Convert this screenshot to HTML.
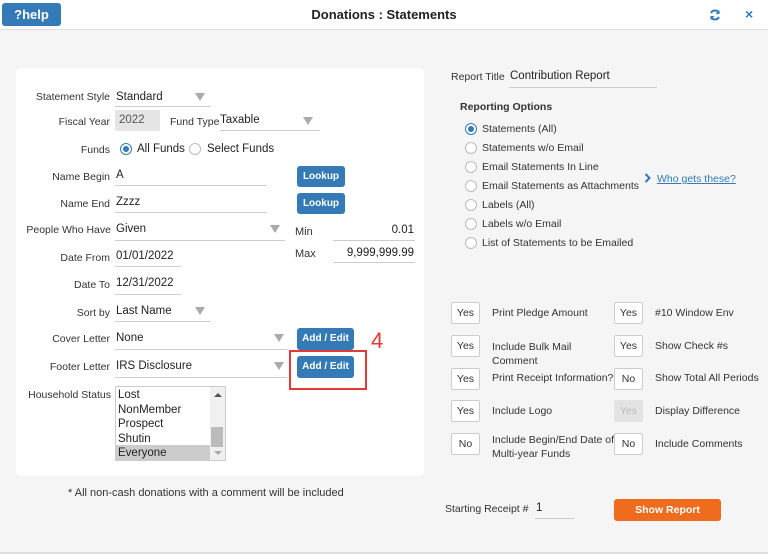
<!DOCTYPE html>
<html><head><meta charset="utf-8"><style>
*{margin:0;padding:0;box-sizing:border-box}
body{width:768px;height:554px;background:#f5f5f5;font-family:"Liberation Sans",sans-serif;color:#333;position:relative;overflow:hidden}
.a{position:absolute;white-space:nowrap}
.hdr{position:absolute;left:0;top:0;width:768px;height:30px;background:#fff;border-bottom:1px solid #ddd}
.lbl{font-size:10.5px;color:#333;text-align:right;width:110px}
.val{font-size:11.5px;color:#222}
.ul{position:absolute;border-bottom:1px solid #ccc}
.tri{position:absolute;width:0;height:0;border-left:5px solid transparent;border-right:5px solid transparent;border-top:8px solid #aaa}
.btn{position:absolute;background:#337ab7;color:#fff;font-size:10px;font-weight:bold;text-align:center;border-radius:3px}
.yn{position:absolute;width:29px;height:22px;border:1px solid #ccc;background:#fff;font-size:10.5px;text-align:center;line-height:20px;border-radius:2px;color:#333}
.rad{position:absolute;width:12px;height:12px;border-radius:50%;border:1px solid #bbb;background:#fff}
.rad.on{border-color:#337ab7}
.rad.on:after{content:"";position:absolute;left:2px;top:2px;width:6px;height:6px;border-radius:50%;background:#337ab7}
.t{font-size:10.5px;color:#333;position:absolute;white-space:nowrap}
</style></head><body>
<div class="hdr"></div>
<div class="a" style="left:2px;top:3px;width:59px;height:23px;background:#337ab7;border-radius:3px;color:#fff;font-weight:bold;font-size:13px;line-height:23px;text-align:center">?help</div>
<div class="a" style="left:0;width:768px;top:7px;text-align:center;font-size:13px;font-weight:bold;color:#222">Donations : Statements</div>
<svg class="a" style="left:709px;top:9px" width="12" height="12" viewBox="0 0 12 12"><path d="M10 4A4.5 4.5 0 0 0 2 4M2 8a4.5 4.5 0 0 0 8 0" stroke="#337ab7" stroke-width="2" fill="none"/><path d="M10.5 1v4h-4z M1.5 11V7h4z" fill="#337ab7"/></svg>
<div class="a" style="left:745px;top:6px;font-size:14px;font-weight:bold;color:#337ab7">×</div>

<div class="a" style="left:16px;top:68px;width:408px;height:408px;background:#fff;border-radius:6px"></div>

<div class="a lbl" style="left:0;top:91px">Statement Style</div>
<div class="a val" style="left:116px;top:91px">Standard</div><div class="ul" style="left:115px;top:106px;width:96px"></div><div class="tri" style="left:195px;top:93px"></div>

<div class="a lbl" style="left:0;top:116px">Fiscal Year</div>
<div class="a" style="left:115px;top:110px;width:45px;height:21px;background:#e5e5e5"></div>
<div class="a val" style="left:119px;top:114px;color:#555">2022</div>
<div class="a" style="left:170px;top:116px;font-size:10.5px">Fund Type</div>
<div class="a val" style="left:220px;top:114px">Taxable</div><div class="ul" style="left:220px;top:130px;width:100px"></div><div class="tri" style="left:303px;top:117px"></div>

<div class="a lbl" style="left:0;top:144px">Funds</div>
<div class="rad on" style="left:120px;top:143px"></div><div class="a val" style="left:137px;top:143px">All Funds</div>
<div class="rad" style="left:189px;top:143px"></div><div class="a val" style="left:207px;top:143px">Select Funds</div>

<div class="a lbl" style="left:0;top:171px">Name Begin</div>
<div class="a val" style="left:116px;top:169px">A</div><div class="ul" style="left:115px;top:185px;width:152px"></div>
<div class="btn" style="left:297px;top:166px;width:48px;height:21px;line-height:21px">Lookup</div>

<div class="a lbl" style="left:0;top:198px">Name End</div>
<div class="a val" style="left:116px;top:196px">Zzzz</div><div class="ul" style="left:115px;top:212px;width:152px"></div>
<div class="btn" style="left:297px;top:193px;width:48px;height:21px;line-height:21px">Lookup</div>

<div class="a lbl" style="left:0;top:224px;width:111px">People Who Have</div>
<div class="a val" style="left:116px;top:223px">Given</div><div class="ul" style="left:115px;top:240px;width:170px"></div><div class="tri" style="left:270px;top:225px"></div>
<div class="a" style="left:295px;top:226px;font-size:11px">Min</div>
<div class="a val" style="left:334px;top:224px;width:80px;text-align:right">0.01</div><div class="ul" style="left:333px;top:240px;width:82px"></div>
<div class="a" style="left:295px;top:248px;font-size:11px">Max</div>
<div class="a val" style="left:334px;top:247px;width:80px;text-align:right">9,999,999.99</div><div class="ul" style="left:333px;top:262px;width:82px"></div>

<div class="a lbl" style="left:0;top:252px">Date From</div>
<div class="a val" style="left:116px;top:250px">01/01/2022</div><div class="ul" style="left:115px;top:266px;width:66px"></div>
<div class="a lbl" style="left:0;top:279px">Date To</div>
<div class="a val" style="left:116px;top:277px">12/31/2022</div><div class="ul" style="left:115px;top:294px;width:66px"></div>

<div class="a lbl" style="left:0;top:307px">Sort by</div>
<div class="a val" style="left:116px;top:305px">Last Name</div><div class="ul" style="left:115px;top:321px;width:96px"></div><div class="tri" style="left:195px;top:307px"></div>

<div class="a lbl" style="left:0;top:333px">Cover Letter</div>
<div class="a val" style="left:116px;top:332px">None</div><div class="ul" style="left:115px;top:349px;width:172px"></div><div class="tri" style="left:274px;top:334px"></div>
<div class="btn" style="left:297px;top:328px;width:57px;height:22px;line-height:22px">Add / Edit</div>

<div class="a lbl" style="left:0;top:361px">Footer Letter</div>
<div class="a val" style="left:116px;top:360px">IRS Disclosure</div><div class="ul" style="left:115px;top:377px;width:172px"></div><div class="tri" style="left:274px;top:362px"></div>
<div class="btn" style="left:297px;top:356px;width:57px;height:22px;line-height:22px">Add / Edit</div>
<div class="a" style="left:289px;top:350px;width:78px;height:40px;border:2px solid #e53935"></div>
<div class="a" style="left:371px;top:328px;font-size:22px;color:#e53935">4</div>

<div class="a lbl" style="left:0;top:389px;width:111px">Household Status</div>
<div class="a" style="left:115px;top:386px;width:111px;height:75px;border:1px solid #ccc;background:#fff"></div>
<div class="a" style="left:116px;top:445px;width:94px;height:15px;background:#ccc"></div>
<div class="a" style="left:210px;top:387px;width:15px;height:73px;background:#f0f0f0"></div>
<div class="a" style="left:211px;top:427px;width:12px;height:20px;background:#bbb"></div>
<div class="a" style="left:214px;top:393px;border-left:4px solid transparent;border-right:4px solid transparent;border-bottom:4px solid #555"></div>
<div class="a" style="left:214px;top:451px;border-left:4px solid transparent;border-right:4px solid transparent;border-top:4px solid #aaa"></div>
<div class="a val" style="left:118px;top:388px;line-height:14.5px">Lost<br>NonMember<br>Prospect<br>Shutin<br>Everyone</div>

<div class="a" style="left:68px;top:487px;font-size:11px">* All non-cash donations with a comment will be included</div>

<div class="t" style="left:451px;top:71px">Report Title</div>
<div class="a val" style="left:510px;top:70px">Contribution Report</div><div class="ul" style="left:509px;top:87px;width:148px"></div>
<div class="t" style="left:460px;top:101px;font-weight:bold">Reporting Options</div>
<div class="rad on" style="left:465px;top:123px"></div><div class="t" style="left:482px;top:123px">Statements (All)</div>
<div class="rad" style="left:465px;top:142px"></div><div class="t" style="left:482px;top:142px">Statements w/o Email</div>
<div class="rad" style="left:465px;top:161px"></div><div class="t" style="left:482px;top:161px">Email Statements In Line</div>
<div class="rad" style="left:465px;top:180px"></div><div class="t" style="left:482px;top:180px">Email Statements as Attachments</div>
<div class="rad" style="left:465px;top:199px"></div><div class="t" style="left:482px;top:199px">Labels (All)</div>
<div class="rad" style="left:465px;top:218px"></div><div class="t" style="left:482px;top:218px">Labels w/o Email</div>
<div class="rad" style="left:465px;top:237px"></div><div class="t" style="left:482px;top:237px">List of Statements to be Emailed</div>
<svg class="a" style="left:644px;top:173px" width="8" height="10" viewBox="0 0 8 10"><path d="M1.5 1l4 4-4 4" stroke="#337ab7" stroke-width="2" fill="none"/></svg>
<div class="t" style="left:657px;top:173px;color:#337ab7;text-decoration:underline">Who gets these?</div>

<div class="yn" style="left:451px;top:302px">Yes</div><div class="t" style="left:492px;top:307px">Print Pledge Amount</div>
<div class="yn" style="left:614px;top:302px">Yes</div><div class="t" style="left:655px;top:307px">#10 Window Env</div>
<div class="yn" style="left:451px;top:335px">Yes</div><div class="t" style="left:492px;top:340px;line-height:14px">Include Bulk Mail<br>Comment</div>
<div class="yn" style="left:614px;top:335px">Yes</div><div class="t" style="left:655px;top:340px">Show Check #s</div>
<div class="yn" style="left:451px;top:368px">Yes</div><div class="t" style="left:492px;top:372px">Print Receipt Information?</div>
<div class="yn" style="left:614px;top:368px">No</div><div class="t" style="left:655px;top:372px">Show Total All Periods</div>
<div class="yn" style="left:451px;top:400px">Yes</div><div class="t" style="left:492px;top:405px">Include Logo</div>
<div class="yn" style="left:614px;top:400px;background:#e3e3e3;border-color:#e3e3e3;color:#bbb">Yes</div><div class="t" style="left:655px;top:405px">Display Difference</div>
<div class="yn" style="left:451px;top:433px">No</div><div class="t" style="left:492px;top:433px;line-height:14px">Include Begin/End Date of<br>Multi-year Funds</div>
<div class="yn" style="left:614px;top:433px">No</div><div class="t" style="left:655px;top:438px">Include Comments</div>

<div class="t" style="left:445px;top:503px">Starting Receipt #</div>
<div class="a val" style="left:536px;top:502px">1</div><div class="ul" style="left:535px;top:518px;width:39px"></div>
<div class="a" style="left:614px;top:499px;width:107px;height:22px;background:#ef6c1f;border-radius:3px;color:#fff;font-size:10.5px;font-weight:bold;text-align:center;line-height:22px">Show Report</div>
<div class="a" style="left:0;top:552px;width:768px;height:2px;background:#ddd"></div>
</body></html>
